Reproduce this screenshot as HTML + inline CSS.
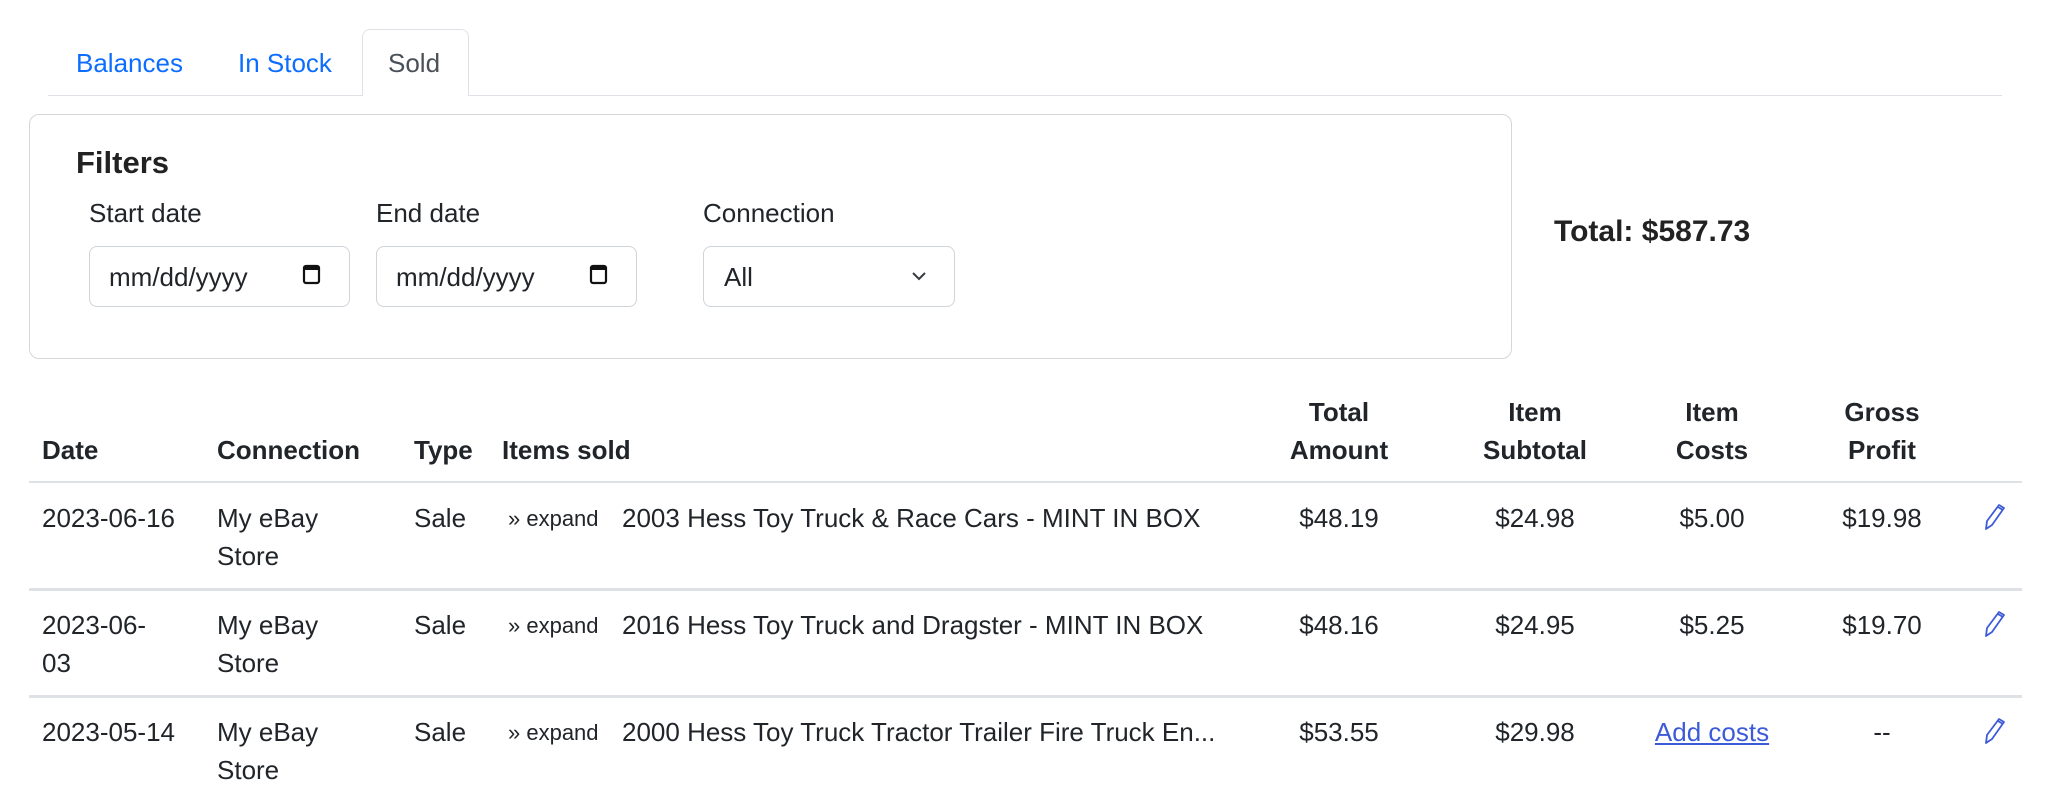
<!DOCTYPE html>
<html><head><meta charset="utf-8"><style>
body{margin:0;width:2048px;height:800px;overflow:hidden;background:#fff;font-family:"Liberation Sans",Arial,sans-serif;color:#212529;font-size:26px;position:relative}
.a{position:absolute;white-space:nowrap;line-height:1}
.tabline{position:absolute;left:48px;top:95px;width:1954px;height:1px;background:#dee2e6}
.tab{position:absolute;left:362px;top:29px;width:107px;height:67px;border:1px solid #dee2e6;border-bottom:none;border-radius:8px 8px 0 0;background:#fff;box-sizing:border-box}
.blue{color:#0d6efd}
.box{position:absolute;left:29px;top:114px;width:1483px;height:245px;border:1.5px solid #d4d7da;border-radius:10px;box-sizing:border-box}
.inp{position:absolute;top:246px;height:61px;border:1.5px solid #ced4da;border-radius:8px;box-sizing:border-box}
.c{transform:translateX(-50%)}
.b{font-weight:bold}
.hl{position:absolute;left:29px;width:1993px;background:#dee2e6}
.sm{font-size:22px}
</style></head><body>
<div class="tabline"></div>
<div class="tab"></div>
<div class="a blue" style="left:76px;top:50px">Balances</div>
<div class="a blue" style="left:238px;top:50px">In Stock</div>
<div class="a" style="left:388px;top:50px;color:#495057">Sold</div>

<div class="box"></div>
<div class="a" style="left:76px;top:147px;font-size:31px;font-weight:bold;color:#222">Filters</div>
<div class="a" style="left:89px;top:200px">Start date</div>
<div class="a" style="left:376px;top:200px">End date</div>
<div class="a" style="left:703px;top:200px">Connection</div>
<div class="inp" style="left:89px;width:261px"></div>
<div class="inp" style="left:376px;width:261px"></div>
<div class="inp" style="left:703px;width:252px"></div>
<div class="a" style="left:109px;top:264px">mm/dd/yyyy</div>
<div class="a" style="left:396px;top:264px">mm/dd/yyyy</div>
<div class="a" style="left:724px;top:264px">All</div>
<svg class="a" style="left:302px;top:262px" width="20" height="24" viewBox="0 0 20 24"><rect x="2" y="4" width="15" height="17" rx="2" fill="none" stroke="#111" stroke-width="2.2"/><rect x="2" y="4" width="15" height="4" fill="#111"/></svg>
<svg class="a" style="left:589px;top:262px" width="20" height="24" viewBox="0 0 20 24"><rect x="2" y="4" width="15" height="17" rx="2" fill="none" stroke="#111" stroke-width="2.2"/><rect x="2" y="4" width="15" height="4" fill="#111"/></svg>
<svg class="a" style="left:911px;top:270px" width="16" height="12" viewBox="0 0 16 12"><path d="M2 3l6 6 6-6" fill="none" stroke="#343a40" stroke-width="2"/></svg>

<div class="a" style="left:1554px;top:217px;font-size:30px;font-weight:bold;color:#222">Total: $587.73</div>

<div class="a b" style="left:42px;top:437px">Date</div>
<div class="a b" style="left:217px;top:437px">Connection</div>
<div class="a b" style="left:414px;top:437px">Type</div>
<div class="a b" style="left:502px;top:437px">Items sold</div>
<div class="a b c" style="left:1339px;top:399px">Total</div>
<div class="a b c" style="left:1339px;top:437px">Amount</div>
<div class="a b c" style="left:1535px;top:399px">Item</div>
<div class="a b c" style="left:1535px;top:437px">Subtotal</div>
<div class="a b c" style="left:1712px;top:399px">Item</div>
<div class="a b c" style="left:1712px;top:437px">Costs</div>
<div class="a b c" style="left:1882px;top:399px">Gross</div>
<div class="a b c" style="left:1882px;top:437px">Profit</div>
<div class="hl" style="top:481px;height:2px"></div>

<div class="a" style="left:42px;top:505px">2023-06-16</div>
<div class="a" style="left:217px;top:505px">My eBay</div>
<div class="a" style="left:217px;top:543px">Store</div>
<div class="a" style="left:414px;top:505px">Sale</div>
<div class="a sm" style="left:508px;top:508px">» expand</div>
<div class="a" style="left:622px;top:505px">2003 Hess Toy Truck &amp; Race Cars - MINT IN BOX</div>
<div class="a c" style="left:1339px;top:505px">$48.19</div>
<div class="a c" style="left:1535px;top:505px">$24.98</div>
<div class="a c" style="left:1712px;top:505px">$5.00</div>
<div class="a c" style="left:1882px;top:505px">$19.98</div>
<div class="hl" style="top:588px;height:3px"></div>

<div class="a" style="left:42px;top:612px">2023-06-</div>
<div class="a" style="left:42px;top:650px">03</div>
<div class="a" style="left:217px;top:612px">My eBay</div>
<div class="a" style="left:217px;top:650px">Store</div>
<div class="a" style="left:414px;top:612px">Sale</div>
<div class="a sm" style="left:508px;top:615px">» expand</div>
<div class="a" style="left:622px;top:612px">2016 Hess Toy Truck and Dragster - MINT IN BOX</div>
<div class="a c" style="left:1339px;top:612px">$48.16</div>
<div class="a c" style="left:1535px;top:612px">$24.95</div>
<div class="a c" style="left:1712px;top:612px">$5.25</div>
<div class="a c" style="left:1882px;top:612px">$19.70</div>
<div class="hl" style="top:695px;height:3px"></div>

<div class="a" style="left:42px;top:719px">2023-05-14</div>
<div class="a" style="left:217px;top:719px">My eBay</div>
<div class="a" style="left:217px;top:757px">Store</div>
<div class="a" style="left:414px;top:719px">Sale</div>
<div class="a sm" style="left:508px;top:722px">» expand</div>
<div class="a" style="left:622px;top:719px">2000 Hess Toy Truck Tractor Trailer Fire Truck En...</div>
<div class="a c" style="left:1339px;top:719px">$53.55</div>
<div class="a c" style="left:1535px;top:719px">$29.98</div>
<div class="a c" style="left:1712px;top:719px;color:#3d5bd9;text-decoration:underline">Add costs</div>
<div class="a c" style="left:1882px;top:719px">--</div>

<svg class="a" style="left:1982px;top:502px" width="26" height="30" viewBox="0 0 26 30"><path d="M4 27l1-8L17 3l5 3L10 23z M16 5l5 3" fill="none" stroke="#3d5bd9" stroke-width="1.8" stroke-linejoin="round"/></svg>
<svg class="a" style="left:1982px;top:609px" width="26" height="30" viewBox="0 0 26 30"><path d="M4 27l1-8L17 3l5 3L10 23z M16 5l5 3" fill="none" stroke="#3d5bd9" stroke-width="1.8" stroke-linejoin="round"/></svg>
<svg class="a" style="left:1982px;top:716px" width="26" height="30" viewBox="0 0 26 30"><path d="M4 27l1-8L17 3l5 3L10 23z M16 5l5 3" fill="none" stroke="#3d5bd9" stroke-width="1.8" stroke-linejoin="round"/></svg>
</body></html>
